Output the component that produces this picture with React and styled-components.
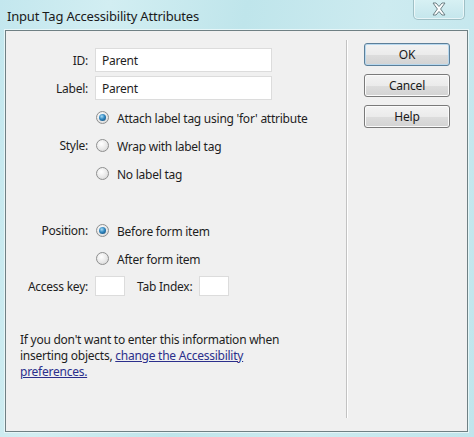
import styled, { createGlobalStyle } from "styled-components";

const GlobalStyle = createGlobalStyle`
  html, body {
    margin: 0;
    padding: 0;
  }
  body {
    width: 474px;
    height: 437px;
    overflow: hidden;
    font-family: "Noto Sans", "DejaVu Sans", sans-serif;
  }
`;

const Window = styled.div`
  width: 474px;
  height: 437px;
  display: flex;
  flex-direction: column;
  background: linear-gradient(
    100deg,
    #c3e7ee 0%,
    #d2eef2 20%,
    #bfe5eb 45%,
    #cdebf0 70%,
    #c0e5ec 100%
  );
  box-sizing: border-box;
`;

const TitleBar = styled.div`
  height: 30px;
  display: flex;
  justify-content: space-between;
  align-items: flex-start;
  flex-shrink: 0;
`;

const Title = styled.div`
  padding: 7px 0 0 7px;
  font-size: 13px;
  letter-spacing: -0.2px;
  color: #1a1a1a;
`;

const CloseButton = styled.div`
  width: 52px;
  height: 21px;
  margin: -1px 9px 0 0;
  box-sizing: border-box;
  border: 1px solid #9fc0c6;
  border-top: none;
  border-radius: 0 0 5px 5px;
  background: linear-gradient(#d8f1f4, #c4e6ec);
  box-shadow: inset 0 0 0 1px rgba(255, 255, 255, 0.6);
  display: flex;
  align-items: center;
  justify-content: center;
`;

const Client = styled.div`
  flex: 1;
  margin: 0 6px 5px 5px;
  display: flex;
  background: #f0f0f0;
  border: 1px solid #6f8084;
  box-shadow: 0 0 0 1px #e6f6f8;
`;

const LeftPanel = styled.div`
  width: 340px;
  padding-top: 17px;
  box-sizing: border-box;
  display: flex;
  flex-direction: column;
  font-size: 12px;
  letter-spacing: -0.25px;
  color: #1e1e1e;
`;

const Divider = styled.div`
  width: 1px;
  margin: 9px 0 13px;
  background: #c2c2c2;
  border-right: 1px solid #ffffff;
`;

const RightPanel = styled.div`
  padding: 12px 0 0 16px;
  display: flex;
  flex-direction: column;
  gap: 8px;
`;

const Button = styled.div`
  width: 86px;
  height: 23px;
  box-sizing: border-box;
  display: flex;
  align-items: center;
  justify-content: center;
  border: 1px solid ${(p) => (p.$default ? "#5c7f99" : "#7a7a7a")};
  border-radius: 3px;
  background: linear-gradient(#f3f3f3 0%, #ebebeb 50%, #dddddd 51%, #d3d3d3 100%);
  box-shadow: inset 0 0 0 1px ${(p) => (p.$default ? "#b8d8ee" : "#fbfbfb")};
  font-size: 12px;
  letter-spacing: -0.2px;
  color: #1a1a1a;
`;

const Row = styled.div`
  height: ${(p) => p.$h}px;
  margin-top: ${(p) => p.$mt || 0}px;
  display: grid;
  grid-template-columns: 82px 1fr;
  column-gap: 7px;
  align-items: center;
`;

const FieldLabel = styled.div`
  text-align: right;
  white-space: nowrap;
`;

const TextInput = styled.div`
  width: ${(p) => p.$w}px;
  height: ${(p) => p.$hh}px;
  box-sizing: border-box;
  background: #ffffff;
  border: 1px solid #dcdcdc;
  padding-left: 6px;
  display: flex;
  align-items: center;
`;

const Option = styled.div`
  display: flex;
  align-items: center;
  gap: 8px;
  padding-left: 1px;
`;

const OptionText = styled.span`
  margin-top: 3px;
`;

const Radio = styled.span`
  width: 13px;
  height: 13px;
  box-sizing: border-box;
  border-radius: 50%;
  border: 1px solid #8e8f8f;
  background: radial-gradient(circle at 40% 35%, #ffffff 0%, #e8e8e8 55%, #cfcfcf 100%);
  display: flex;
  align-items: center;
  justify-content: center;
  flex-shrink: 0;

  &::after {
    content: "";
    display: ${(p) => (p.$checked ? "block" : "none")};
    width: 7px;
    height: 7px;
    border-radius: 50%;
    background: radial-gradient(circle at 40% 35%, #a9dcf5 0%, #2f86c0 45%, #0f3f66 100%);
  }
`;

const Inline = styled.div`
  display: flex;
  align-items: center;
`;

const InlineLabel = styled.span`
  margin: 0 7px 0 12px;
`;

const Note = styled.p`
  margin: 32px 0 0 14px;
  line-height: 16px;
  width: 272px;
`;

const Link = styled.a`
  color: #2b2f8c;
  text-decoration: underline;
`;

const XIcon = () => (
  <svg width="16" height="14" viewBox="0 0 16 14">
    <path
      d="M2 1 L5 1 L8 4.5 L11 1 L14 1 L9.6 7 L14 13 L11 13 L8 9.5 L5 13 L2 13 L6.4 7 Z"
      fill="#ffffff"
      stroke="#6b7f84"
      strokeWidth="1"
      strokeLinejoin="round"
    />
  </svg>
);

const RadioOption = ({ checked, children }) => (
  <Option>
    <Radio $checked={checked} />
    <OptionText>{children}</OptionText>
  </Option>
);

export default function App() {
  return (
    <>
      <GlobalStyle />
      <Window>
        <TitleBar>
          <Title>Input Tag Accessibility Attributes</Title>
          <CloseButton>
            <XIcon />
          </CloseButton>
        </TitleBar>
        <Client>
          <LeftPanel>
            <Row $h={24}>
              <FieldLabel>ID:</FieldLabel>
              <TextInput $w={177} $hh={24}>Parent</TextInput>
            </Row>
            <Row $h={24} $mt={4}>
              <FieldLabel>Label:</FieldLabel>
              <TextInput $w={177} $hh={24}>Parent</TextInput>
            </Row>
            <Row $h={28} $mt={3}>
              <FieldLabel />
              <RadioOption checked>Attach label tag using 'for' attribute</RadioOption>
            </Row>
            <Row $h={28}>
              <FieldLabel>Style:</FieldLabel>
              <RadioOption>Wrap with label tag</RadioOption>
            </Row>
            <Row $h={28}>
              <FieldLabel />
              <RadioOption>No label tag</RadioOption>
            </Row>
            <Row $h={28} $mt={29}>
              <FieldLabel>Position:</FieldLabel>
              <RadioOption checked>Before form item</RadioOption>
            </Row>
            <Row $h={28}>
              <FieldLabel />
              <RadioOption>After form item</RadioOption>
            </Row>
            <Row $h={28}>
              <FieldLabel>Access key:</FieldLabel>
              <Inline>
                <TextInput $w={30} $hh={20} />
                <InlineLabel>Tab Index:</InlineLabel>
                <TextInput $w={30} $hh={20} />
              </Inline>
            </Row>
            <Note>
              If you don't want to enter this information when inserting
              objects, <Link>change the Accessibility preferences.</Link>
            </Note>
          </LeftPanel>
          <Divider />
          <RightPanel>
            <Button $default>OK</Button>
            <Button>Cancel</Button>
            <Button>Help</Button>
          </RightPanel>
        </Client>
      </Window>
    </>
  );
}
